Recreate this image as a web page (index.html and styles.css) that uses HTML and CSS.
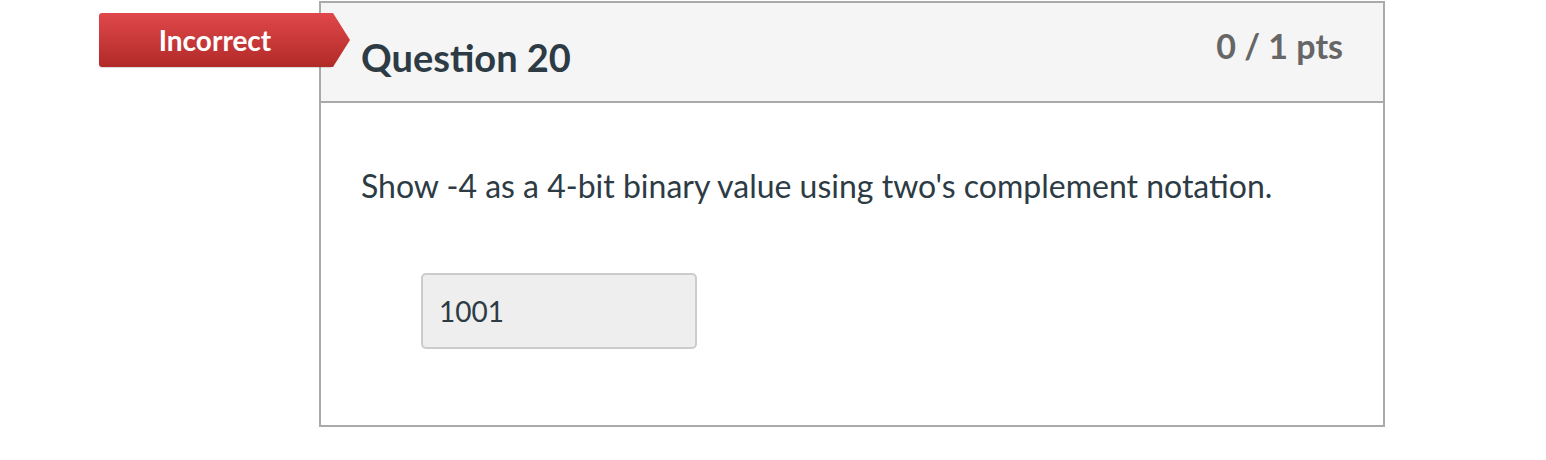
FILE: index.html
```html
<!DOCTYPE html>
<html>
<head>
<meta charset="utf-8">
<link rel="stylesheet" href="styles.css">
</head>
<body>
<div class="page">
  <div class="question">
    <div class="badge">
      <span class="badge-body">Incorrect</span>
      <svg class="badge-tip" width="20" height="54" viewBox="0 0 20 54">
        <defs>
          <linearGradient id="g" x1="0" y1="0" x2="0" y2="1">
            <stop offset="0" stop-color="#e0484b"/>
            <stop offset="1" stop-color="#b12a28"/>
          </linearGradient>
        </defs>
        <polygon points="0,0 2,0 19,27 2,54 0,54" fill="url(#g)"/>
      </svg>
    </div>
    <div class="header">
      <h2 class="title">Question 20</h2>
      <div class="pts">0 / 1 pts</div>
    </div>
    <div class="body">
      <p class="text">Show -4 as a 4-bit binary value using two's complement notation.</p>
      <div class="answer">1001</div>
    </div>
  </div>
</div>
</body>
</html>
```

FILE: styles.css
```css
html, body {
  margin: 0;
  padding: 0;
  background: #fff;
}
body {
  font-family: Lato, "Liberation Sans", sans-serif;
  color: #2d3b45;
}
.page {
  padding: 1px 0 0 319px;
}
.question {
  position: relative;
  width: 1062px;
  border: 2px solid #aaaaaa;
}
.badge {
  position: absolute;
  left: -222px;
  top: 10px;
  display: flex;
  height: 54px;
}
.badge-body {
  width: 232px;
  height: 54px;
  box-sizing: border-box;
  background: linear-gradient(#e0484b, #b12a28);
  border-radius: 3px 0 0 3px;
  color: #fff;
  font-weight: 700;
  font-size: 28px;
  line-height: 54px;
  text-align: center;
  box-shadow: 0 1px 1px rgba(0,0,0,0.15);
}
.badge-tip {
  display: block;
}
.header {
  background: #f5f5f5;
  border-bottom: 2px solid #aaaaaa;
  height: 98px;
  display: flex;
  justify-content: space-between;
  align-items: flex-start;
  padding: 0 40px 0 40px;
}
.title {
  margin: 31px 0 0 0;
  font-size: 38px;
  font-weight: 700;
  line-height: 46px;
  color: #2d3b45;
}
.pts {
  margin-top: 23px;
  font-size: 34px;
  font-weight: 700;
  line-height: 40px;
  color: #666666;
}
.body {
  height: 322px;
  padding: 0 40px;
}
.text {
  margin: 0;
  padding-top: 64px;
  font-size: 32px;
  line-height: 38px;
}
.answer {
  margin: 68px 0 0 60px;
  width: 276px;
  height: 76px;
  box-sizing: border-box;
  background: #eeeeee;
  border: 2px solid #cccccc;
  border-radius: 5px;
  padding-left: 16px;
  font-size: 28px;
  line-height: 72px;
}
```
